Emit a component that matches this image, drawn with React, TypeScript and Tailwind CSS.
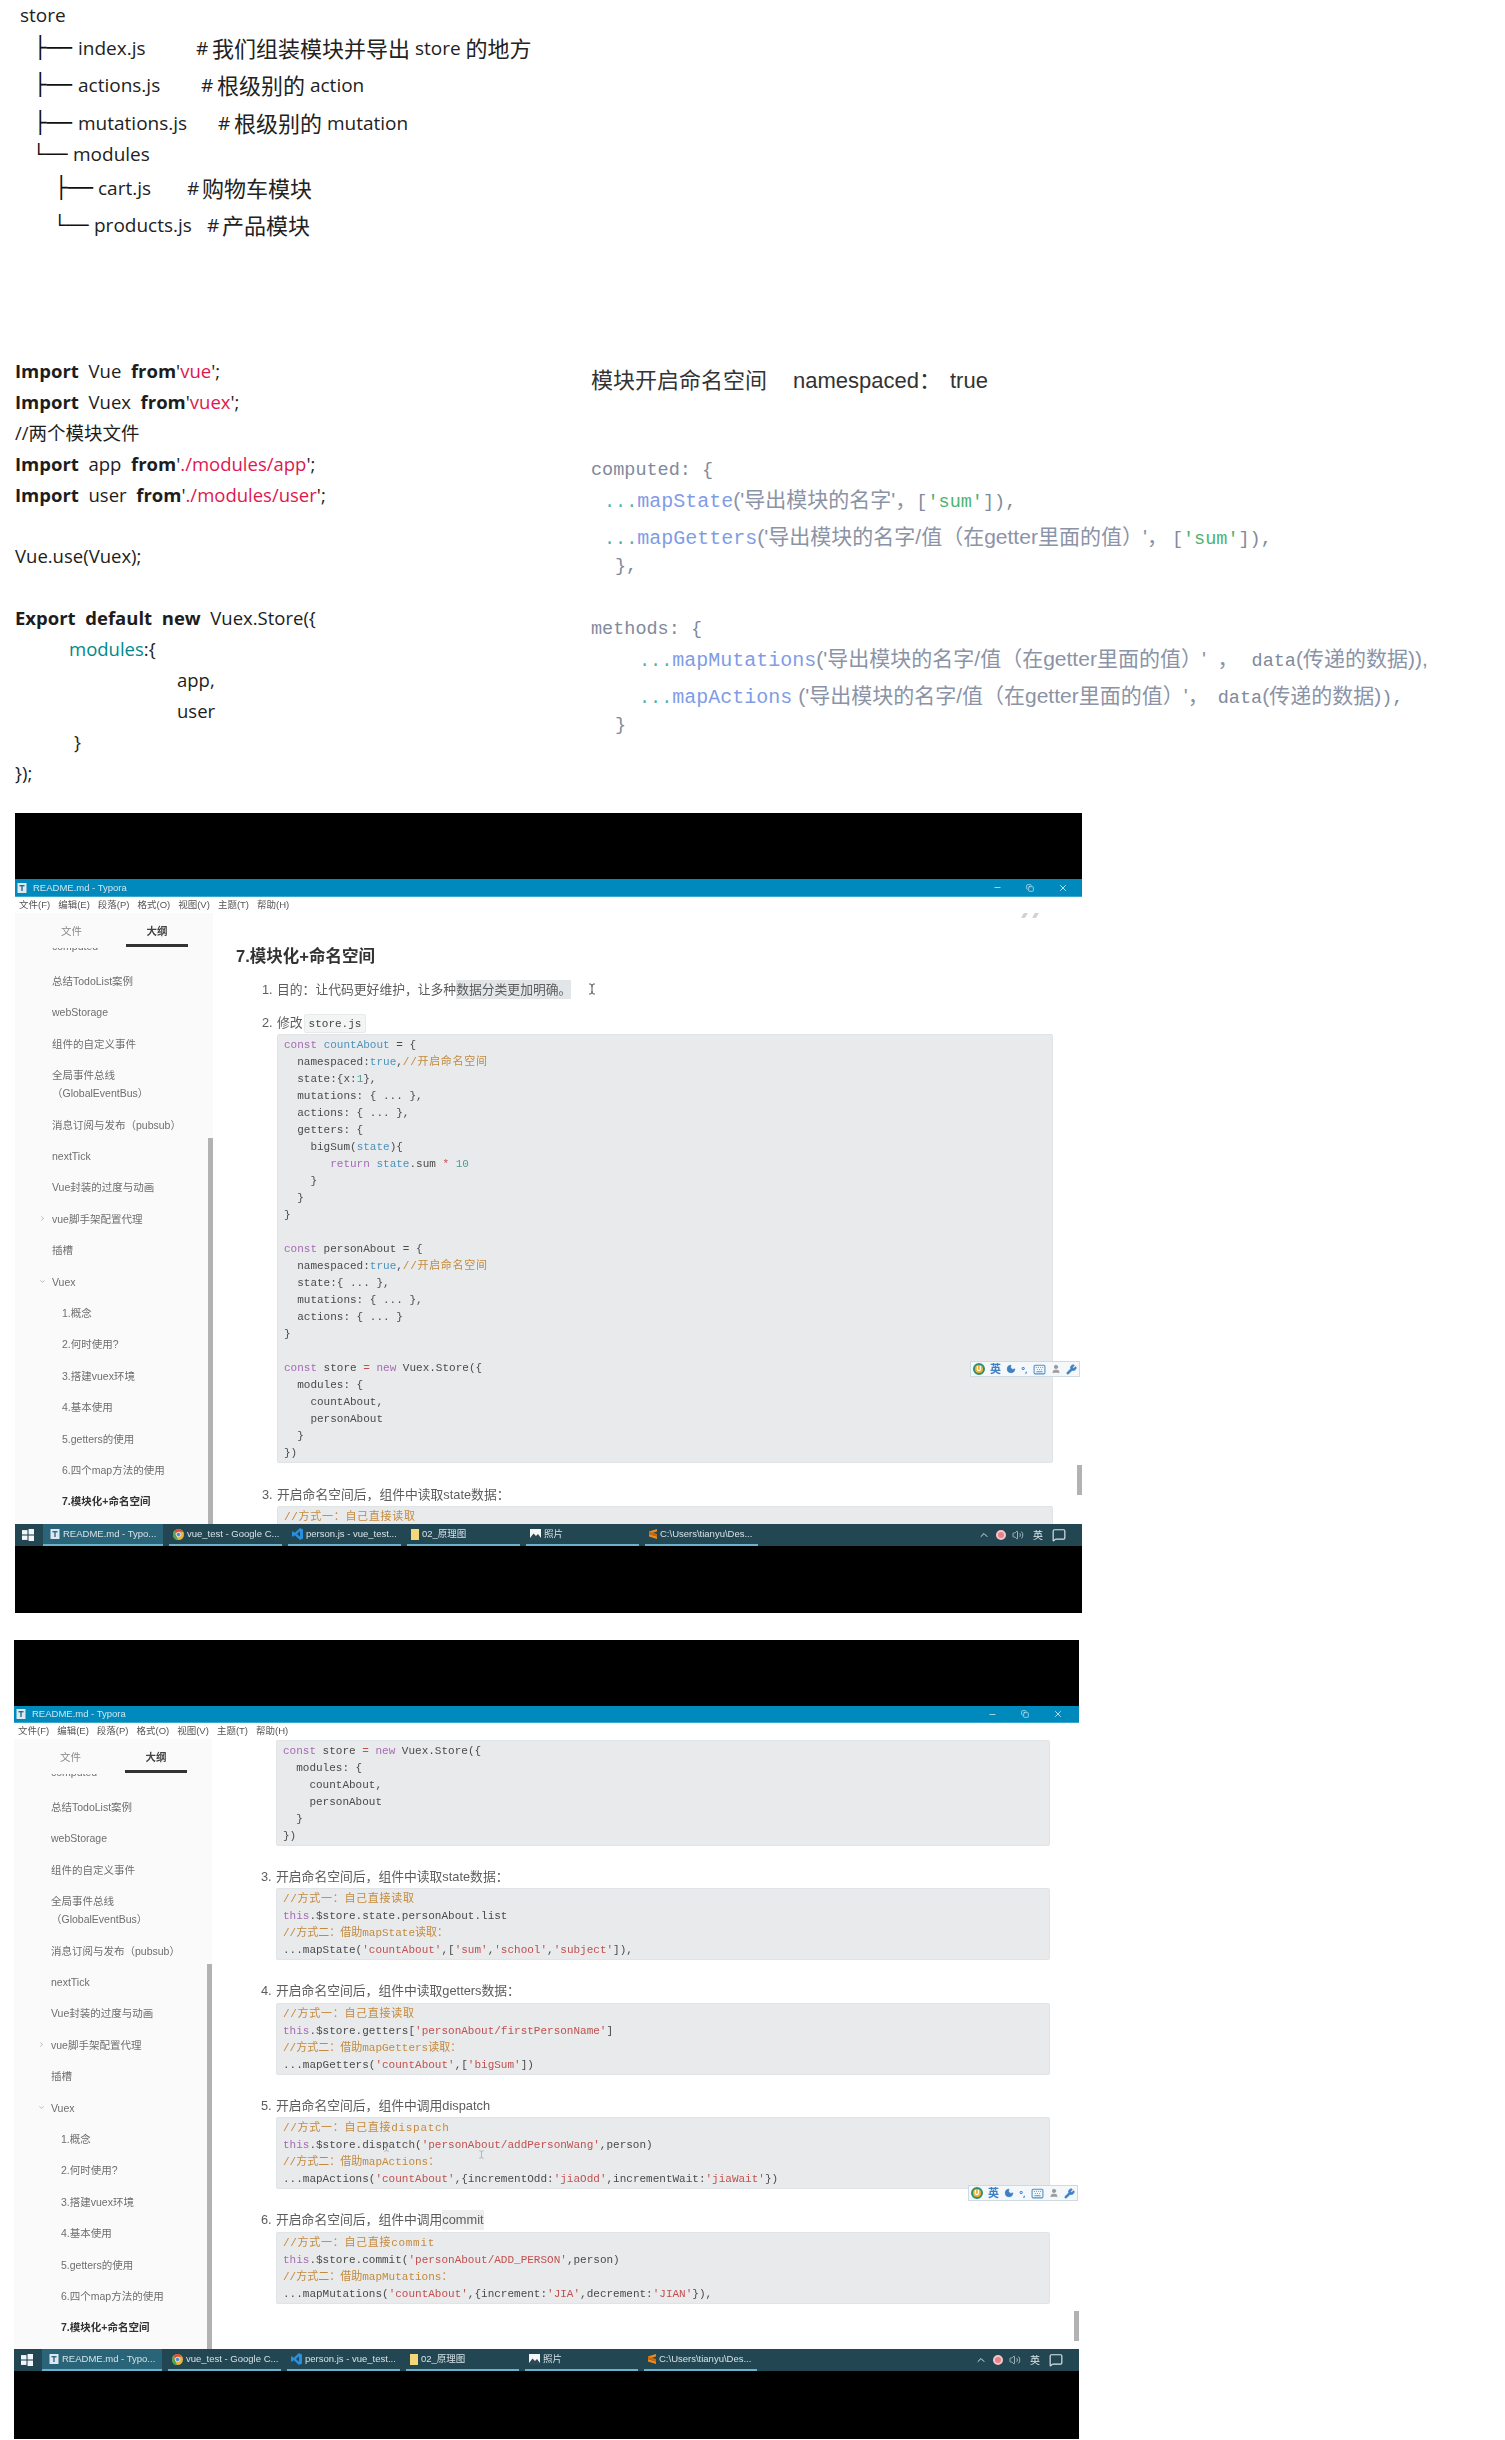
import React from "react";
import { ChevronUp, ChevronRight, ChevronDown, Minus, X, Copy, Volume2, MessageSquare, Moon, Keyboard, User, Wrench, TextCursor } from "lucide-react";

const UI = "font-['Liberation_Sans','Noto_Sans_CJK_SC',sans-serif]";
const MONO = "font-['Liberation_Mono','Noto_Sans_CJK_SC',monospace]";
const SEGOE = "font-['Open_Sans','Noto_Sans_CJK_SC',sans-serif]";

type Seg = [string, string?];
const K = "text-[#a66bb4]";
const C = "text-[#c48a3c]";
const C2 = "text-[#c48a3c] tracking-[0.7px]";
const S = "text-[#c2504f]";
const V = "text-[#4b93bd]";
const N = "text-[#4f9f8c]";
const plain = (t: string): Seg[] => [[t]];

function Tree({ glyph, glyphCls, name, nameCls, hashCls, cn, children }: { glyph: string; glyphCls: string; name: string; nameCls: string; hashCls?: string; cn: string; children?: React.ReactNode }) {
  return (
    <div className={`flex items-center h-[30px] whitespace-pre text-[19px] text-[#222] ${SEGOE} ${cn}`}>
      <span className={`font-['DejaVu_Sans_Mono',monospace] leading-none text-[#111] shrink-0 ${glyphCls}`}>{glyph}</span>
      <span className={`shrink-0 ${nameCls}`}>{name}</span>
      {hashCls ? <span className={hashCls}>#</span> : null}
      {children}
    </div>
  );
}
const Z = ({ children }: { children: React.ReactNode }) => <span className="text-[22px]">{children}</span>;

function Imp({ children }: { children: React.ReactNode }) {
  return <div className="h-[30.9px] leading-[30.9px] whitespace-pre">{children}</div>;
}
const B = ({ children }: { children: React.ReactNode }) => <span className="font-bold">{children}</span>;
const R = ({ children }: { children: React.ReactNode }) => <span className="text-[#e0174f]">{children}</span>;

const Dots = () => <span className="text-[#4fb3a9] text-[18.5px]">...</span>;
const Fn = ({ children }: { children: React.ReactNode }) => <span className="text-[#7f9ce6] text-[20px]">{children}</span>;
const Cn = ({ children }: { children: React.ReactNode }) => <span className={`text-[21px] text-[#8b93a6] ${UI}`}>{children}</span>;
const Sum = () => <span className="text-[#4cb26f] text-[18.5px]">'sum'</span>;

function RightLine({ cn, children }: { cn: string; children: React.ReactNode }) {
  return <div className={`h-[30px] leading-[30px] whitespace-pre text-[18.5px] text-[#7f8a9c] ${MONO} ${cn}`}>{children}</div>;
}

function Code({ lines, cn }: { lines: Seg[][]; cn: string }) {
  return (
    <div className={`ml-[64px] bg-[#e8eaec] border border-[#e1e4e6] rounded-[2px] pt-[2px] pb-0 pl-[6px] text-[11px] leading-[17px] text-[#4a4a4a] whitespace-pre shrink-0 ${MONO} ${cn}`}>
      {lines.map((l, i) => (
        <div key={i} className="h-[17px]">
          {l.map((s, j) => <span key={j} className={s[1] ?? ""}>{s[0]}</span>)}
        </div>
      ))}
    </div>
  );
}

function Li({ n, cn, children }: { n: string; cn: string; children: React.ReactNode }) {
  return (
    <div className={`ml-[49px] h-[20px] flex items-center text-[12.8px] text-[#5c5c5c] whitespace-pre shrink-0 ${UI} ${cn}`}>
      <span className="w-[15px] shrink-0">{n}</span>
      {children}
    </div>
  );
}

const sideItems: { t: string; l: string; icon?: "r" | "d"; h?: string; b?: boolean; second?: string }[] = [
  { t: "总结TodoList案例", l: "pl-[37px]" },
  { t: "webStorage", l: "pl-[37px]" },
  { t: "组件的自定义事件", l: "pl-[37px]" },
  { t: "全局事件总线", second: "\uFF08GlobalEventBus\uFF09", l: "pl-[37px]" },
  { t: "消息订阅与发布\uFF08pubsub\uFF09", l: "pl-[37px]" },
  { t: "nextTick", l: "pl-[37px]" },
  { t: "Vue封装的过度与动画", l: "pl-[37px]" },
  { t: "vue脚手架配置代理", l: "pl-[37px]", icon: "r" },
  { t: "插槽", l: "pl-[37px]" },
  { t: "Vuex", l: "pl-[37px]", icon: "d" },
  { t: "1.概念", l: "pl-[47px]" },
  { t: "2.何时使用?", l: "pl-[47px]" },
  { t: "3.搭建vuex环境", l: "pl-[47px]" },
  { t: "4.基本使用", l: "pl-[47px]" },
  { t: "5.getters的使用", l: "pl-[47px]" },
  { t: "6.四个map方法的使用", l: "pl-[47px]" },
  { t: "7.模块化+命名空间", l: "pl-[47px]", b: true },
];

function Sidebar({ barTop }: { barTop: string }) {
  return (
    <div className={`w-[198px] shrink-0 bg-[#fafafa] relative flex flex-col ${UI}`}>
      <div className="h-[35px] shrink-0 flex relative text-[10.5px]">
        <div className="w-[111px] text-center pt-[11px] text-[#8a8a8a] pl-[2px]">文件</div>
        <div className="w-[62px] text-center pt-[11px] font-bold text-[#444] border-b-[3px] border-[#333] h-[34px]">大纲</div>
      </div>
      <div className="flex-1 overflow-hidden text-[10.5px] text-[#6e6e6e]">
        <div className="h-[31.4px] -mt-[14.7px] pl-[37px] leading-[31.4px]"><div className="-translate-y-[3px]">computed</div></div>
        {sideItems.map((s) => (
          <div key={s.t} className={`${s.second ? "h-[49.6px]" : "h-[31.4px]"} ${s.l} relative flex flex-col justify-center ${s.b ? "font-bold text-[#333]" : ""}`}>
            {s.icon === "r" ? <ChevronRight className="absolute left-[24px] top-[12px] w-[7px] h-[7px] text-[#888]" /> : null}
            {s.icon === "d" ? <ChevronDown className="absolute left-[24px] top-[12px] w-[7px] h-[7px] text-[#888]" /> : null}
            <div className="whitespace-pre leading-[18px]">{s.t}</div>
            {s.second ? <div className="whitespace-pre leading-[18px]">{s.second}</div> : null}
          </div>
        ))}
      </div>
      <div className={`absolute right-0 bottom-0 w-[5px] bg-[#b2b2b2] ${barTop}`} />
    </div>
  );
}

const WinLogo = () => (
  <svg width="12" height="12" viewBox="0 0 11 11" fill="#f2f6f8"><rect x="0" y="1" width="5" height="4" /><rect x="6" y="0" width="5" height="5" /><rect x="0" y="6" width="5" height="4" /><rect x="6" y="6" width="5" height="5" /></svg>
);
const Typora = () => (
  <svg width="10" height="10" viewBox="0 0 9 10"><rect width="9" height="10" fill="#dfe8ee" /><rect x="2" y="2" width="5" height="1.4" fill="#2a6a8a" /><rect x="3.8" y="2" width="1.4" height="6" fill="#2a6a8a" /></svg>
);
const Chrome = () => (
  <svg width="11" height="11" viewBox="0 0 11 11"><circle cx="5.5" cy="5.5" r="5.5" fill="#e9b53a" /><path d="M5.5 0a5.5 5.5 0 0 1 4.8 2.8H5.5A2.7 2.7 0 0 0 3 4.4L1.2 2A5.5 5.5 0 0 1 5.5 0z" fill="#d9503f" /><path d="M1.2 2 3.4 7.2 5 11A5.5 5.5 0 0 1 1.2 2z" fill="#4ea35a" /><circle cx="5.5" cy="5.5" r="2.2" fill="#4a87d8" stroke="#fff" strokeWidth=".7" /></svg>
);
const VsCode = () => (
  <svg width="11" height="12" viewBox="0 0 11 12"><path d="M8 0 11 1.4v9.2L8 12 2.8 7.2.8 8.8 0 8.2V3.8l.8-.6 2 1.6z" fill="#2a8fdc" /><path d="M8 3.2 5 6l3 2.8z" fill="#1c4a5c" /></svg>
);
const Folder = () => <div className="w-[8px] h-[11px] bg-[#f3d778]" />;
const Photos = () => (
  <svg width="11" height="11" viewBox="0 0 11 11"><rect width="11" height="11" fill="#f4f6f7" /><path d="M0 9 3.5 4.5 6 7 8 5l3 4v2H0z" fill="#2b4a55" /></svg>
);
const Sublime = () => (
  <svg width="8" height="10" viewBox="0 0 8 10"><path d="M8 0v2.6L0 5V2.4zM0 5l8 2.4V10L0 7.6z" fill="#ef8a1c" /><path d="M0 2.4 8 5v2.4L0 5z" fill="#c96c10" /></svg>
);

function TaskTab({ icon, label, w, active }: { icon: React.ReactNode; label: string; w: string; active?: boolean }) {
  return (
    <div className={`h-[22px] flex items-center gap-[3px] border-b-[2px] border-[#69b4cc] text-[9.5px] text-[#d6e2e6] whitespace-pre shrink-0 ${w} ${active ? "bg-[#2a6478] pl-[7px]" : "pl-[4px]"}`}>
      <span className="shrink-0 flex items-center">{icon}</span>
      {label}
    </div>
  );
}

function Taskbar() {
  return (
    <div className={`h-[22px] shrink-0 bg-[#234653] flex items-center ${UI}`}>
      <div className="w-[28px] pl-[7px] flex items-center shrink-0"><WinLogo /></div>
      <div className="flex gap-[6px]">
        <TaskTab icon={<Typora />} label="README.md - Typo..." w="w-[120px]" active />
        <TaskTab icon={<Chrome />} label="vue_test - Google C..." w="w-[113px]" />
        <TaskTab icon={<VsCode />} label="person.js - vue_test..." w="w-[113px]" />
        <TaskTab icon={<Folder />} label="02_原理图" w="w-[113px]" />
        <TaskTab icon={<Photos />} label="照片" w="w-[113px]" />
        <TaskTab icon={<Sublime />} label="C:\Users\tianyu\Des..." w="w-[113px]" />
      </div>
      <div className="ml-auto flex items-center gap-[6px] pr-[16px] text-[#dbe5e9] text-[10px]">
        <ChevronUp className="w-[12px] h-[12px]" />
        <span className="w-[10px] h-[10px] rounded-full bg-[#e8818a] border-2 border-[#f4c6ca]" />
        <Volume2 className="w-[12px] h-[12px] text-[#9eb2ba]" />
        <span className="mx-[3px]">英</span>
        <MessageSquare className="w-[14px] h-[14px]" />
      </div>
    </div>
  );
}

function Ime({ cn }: { cn: string }) {
  return (
    <div className={`absolute w-[110px] h-[16px] bg-[#f4f8fb] border border-[#cfd9e2] flex items-center justify-between px-[2px] ${cn}`}>
      <span className="w-[12px] h-[12px] rounded-full border-[2px] border-[#2f8f6f] bg-[#f2b233] text-[7px] leading-[8px] text-center text-white font-bold">U</span>
      <span className={`text-[11px] leading-none text-[#3f7fc4] font-bold ${UI}`}>英</span>
      <Moon className="w-[10px] h-[10px] text-[#3f7fc4] fill-[#3f7fc4]" />
      <span className="text-[9px] leading-none text-[#3f7fc4] font-bold">°,</span>
      <Keyboard className="w-[13px] h-[13px] text-[#4f8fc8]" />
      <User className="w-[10px] h-[10px] text-[#999] fill-[#999]" />
      <Wrench className="w-[11px] h-[11px] text-[#3f7fc4] fill-[#3f7fc4]" />
    </div>
  );
}

function Shot({ cn, titleH, bodyH, topH, botH, pad, barTop, ctrlPr, imeCn, scrollCn, children }: { cn: string; titleH: string; bodyH: string; topH: string; botH: string; pad: string; barTop: string; ctrlPr: string; imeCn: string; scrollCn: string; children: React.ReactNode }) {
  return (
    <div className={`flex flex-col bg-white blur-[0.35px] ${cn}`}>
      <div className={`bg-black shrink-0 ${topH}`} />
      <div className={`shrink-0 bg-[#0089bd] border-b border-[#39a9c9] flex items-center pl-[2px] gap-[3px] text-[9.5px] text-[#cfe6ef] ${titleH} ${UI}`}>
        <Typora />
        <span className="ml-[3px]">README.md - Typora</span>
        <div className={`ml-auto flex items-center gap-[24px] text-[#dcedf4] ${ctrlPr}`}>
          <Minus className="w-[9px] h-[9px]" />
          <Copy className="w-[8px] h-[8px]" />
          <X className="w-[10px] h-[10px]" />
        </div>
      </div>
      <div className={`h-[16px] shrink-0 bg-white flex items-center gap-[8px] pl-[4px] text-[9.5px] text-[#555] ${UI}`}>
        {["文件(F)", "编辑(E)", "段落(P)", "格式(O)", "视图(V)", "主题(T)", "帮助(H)"].map((m) => <span key={m}>{m}</span>)}
      </div>
      <div className={`flex shrink-0 overflow-hidden ${bodyH}`}>
        <Sidebar barTop={barTop} />
        <div className={`flex-1 flex flex-col bg-white relative overflow-hidden ${pad}`}>
          {children}
          <div className={`absolute right-0 w-[5px] bg-[#b2b2b2] h-[30px] ${scrollCn}`} />
          <Ime cn={imeCn} />
        </div>
      </div>
      <Taskbar />
      <div className={`bg-black shrink-0 ${botH}`} />
    </div>
  );
}

const store1: Seg[][] = [
  [["const", K], [" "], ["countAbout", V], [" = {"]],
  [["  namespaced:"], ["true", V], [","], ["//开启命名空间", C2]],
  [["  state:{x:"], ["1", N], ["},"]],
  plain("  mutations: { ... },"),
  plain("  actions: { ... },"),
  plain("  getters: {"),
  [["    bigSum("], ["state", V], ["){"]],
  [["       "], ["return", K], [" "], ["state", V], [".sum "], ["*", S], [" "], ["10", N]],
  plain("    }"),
  plain("  }"),
  plain("}"),
  plain(" "),
  [["const", K], [" personAbout = {"]],
  [["  namespaced:"], ["true", V], [","], ["//开启命名空间", C2]],
  plain("  state:{ ... },"),
  plain("  mutations: { ... },"),
  plain("  actions: { ... }"),
  plain("}"),
  plain(" "),
  [["const", K], [" store "], ["=", S], [" "], ["new", K], [" Vuex.Store({"]],
  plain("  modules: {"),
  plain("    countAbout,"),
  plain("    personAbout"),
  plain("  }"),
  plain("})"),
];
const store2 = store1.slice(19);

const q3: Seg[][] = [
  [["//方式一\uFF1A自己直接读取", C2]],
  [["this", K], [".$store.state.personAbout.list"]],
  [["//方式二\uFF1A借助mapState读取\uFF1A", C]],
  [["...mapState("], ["'countAbout'", S], [",["], ["'sum'", S], [","], ["'school'", S], [","], ["'subject'", S], ["]),"]],
];
const q4: Seg[][] = [
  [["//方式一\uFF1A自己直接读取", C2]],
  [["this", K], [".$store.getters["], ["'personAbout/firstPersonName'", S], ["]"]],
  [["//方式二\uFF1A借助mapGetters读取\uFF1A", C]],
  [["...mapGetters("], ["'countAbout'", S], [",["], ["'bigSum'", S], ["])"]],
];
const q5: Seg[][] = [
  [["//方式一\uFF1A自己直接dispatch", C2]],
  [["this", K], [".$store.dispatch("], ["'personAbout/addPersonWang'", S], [",person)"]],
  [["//方式二\uFF1A借助mapActions\uFF1A", C]],
  [["...mapActions("], ["'countAbout'", S], [",{incrementOdd:"], ["'jiaOdd'", S], [",incrementWait:"], ["'jiaWait'", S], ["})"]],
];
const q6: Seg[][] = [
  [["//方式一\uFF1A自己直接commit", C2]],
  [["this", K], [".$store.commit("], ["'personAbout/ADD_PERSON'", S], [",person)"]],
  [["//方式二\uFF1A借助mapMutations\uFF1A", C]],
  [["...mapMutations("], ["'countAbout'", S], [",{increment:"], ["'JIA'", S], [",decrement:"], ["'JIAN'", S], ["}),"]],
];

export default function App() {
  return (
    <div className="w-[1505px] h-[2440px] bg-white overflow-hidden flex flex-col">
      <div className="shrink-0">
        <Tree cn="pl-[20px]" glyph="" glyphCls="" name="store" nameCls="" />
        <Tree cn="mt-[3px] pl-[34px]" glyph="├──" glyphCls="w-[44px] text-[21px]" name="index.js" nameCls="w-[118px]" hashCls="w-[16px]"><Z>我们组装模块并导出</Z> store <Z>的地方</Z></Tree>
        <Tree cn="mt-[7px] pl-[34px]" glyph="├──" glyphCls="w-[44px] text-[21px]" name="actions.js" nameCls="w-[123px]" hashCls="w-[16px]"><Z>根级别的</Z> action</Tree>
        <Tree cn="mt-[8px] pl-[34px]" glyph="├──" glyphCls="w-[44px] text-[21px]" name="mutations.js" nameCls="w-[140px]" hashCls="w-[16px]"><Z>根级别的</Z> mutation</Tree>
        <Tree cn="mt-[1px] pl-[33px]" glyph="└──" glyphCls="w-[40px] text-[19px]" name="modules" nameCls="" />
        <Tree cn="mt-[4px] pl-[55px]" glyph="├──" glyphCls="w-[43px] text-[21px]" name="cart.js" nameCls="w-[89px]" hashCls="w-[15px]"><Z>购物车模块</Z></Tree>
        <Tree cn="mt-[7px] pl-[54px]" glyph="└──" glyphCls="w-[40px] text-[19px]" name="products.js" nameCls="w-[113px]" hashCls="w-[15px]"><Z>产品模块</Z></Tree>
      </div>

      <div className="flex mt-[116px] shrink-0">
        <div className={`ml-[15px] w-[576px] shrink-0 text-[18.5px] text-[#1d1d1d] ${SEGOE}`}>
          <Imp><B>Import</B>  Vue  <B>from</B>'<R>vue</R>';</Imp>
          <Imp><B>Import</B>  Vuex  <B>from</B>'<R>vuex</R>';</Imp>
          <Imp>//两个模块文件</Imp>
          <Imp><B>Import</B>  app  <B>from</B>'<R>./modules/app</R>';</Imp>
          <Imp><B>Import</B>  user  <B>from</B>'<R>./modules/user</R>';</Imp>
          <Imp> </Imp>
          <Imp>Vue.use(Vuex);</Imp>
          <Imp> </Imp>
          <Imp><B>Export</B>  <B>default</B>  <B>new</B>  Vuex.Store({"{"}</Imp>
          <Imp><span className="ml-[54px] text-[#00898c]">modules</span>:{"{"}</Imp>
          <Imp><span className="ml-[162px]">app,</span></Imp>
          <Imp><span className="ml-[162px]">user</span></Imp>
          <Imp><span className="ml-[59px]">{"}"}</span></Imp>
          <Imp>{"});"}</Imp>
        </div>
        <div className="pt-[10px] flex-1">
          <div className={`h-[30px] leading-[30px] text-[22px] text-[#333] whitespace-pre ${UI}`}>模块开启命名空间<span className="ml-[26px]">{"namespaced\uFF1A"}</span><span className="ml-[9px]">true</span></div>
          <RightLine cn="mt-[60px]">computed: {"{"}</RightLine>
          <RightLine cn="pl-[13px] -mt-[1px]"><Dots /><Fn>mapState</Fn><Cn>{"('导出模块的名字'\uFF0C"}</Cn>[<Sum />]),</RightLine>
          <RightLine cn="pl-[13px] mt-[7px]"><Dots /><Fn>mapGetters</Fn><Cn>{"('导出模块的名字/值\uFF08在getter里面的值\uFF09'\uFF0C"}</Cn><span className="ml-[4px]">[</span><Sum />]),</RightLine>
          <RightLine cn="pl-[24px]">{"},"}</RightLine>
          <RightLine cn="mt-[33px]">methods: {"{"}</RightLine>
          <RightLine cn="pl-[48px] -mt-[1px]"><Dots /><Fn>mapMutations</Fn><Cn>{"('导出模块的名字/值\uFF08在getter里面的值\uFF09'  \uFF0C"}</Cn><span className="ml-[13px]">data</span><Cn>(传递的数据)),</Cn></RightLine>
          <RightLine cn="pl-[48px] mt-[7px]"><Dots /><Fn>mapActions</Fn><Cn>{" ('导出模块的名字/值\uFF08在getter里面的值\uFF09'\uFF0C"}</Cn><span className="ml-[9px]">data</span><Cn>(传递的数据)</Cn>),</RightLine>
          <RightLine cn="pl-[24px]">{"}"}</RightLine>
        </div>
      </div>

      <div className="h-[25px] shrink-0" />
      <Shot cn="ml-[15px] w-[1067px] h-[800px] shrink-0" titleH="h-[18px]" topH="h-[66px]" botH="h-[67px]" bodyH="h-[611px]" pad="pt-[31px]" barTop="top-[225px]" ctrlPr="pr-[14px]" imeCn="top-[448px] left-[757px]" scrollCn="top-[552px]">
        <div className={`ml-[23px] h-[24px] leading-[24px] text-[16.5px] font-bold text-[#333] shrink-0 ${UI}`}>7.模块化+命名空间</div>
        <Li n="1." cn="mt-[11px]">{"目的\uFF1A让代码更好维护\uFF0C让多种"}<span className="bg-[#e3e6e9]">数据分类更加明确。</span><TextCursor className="ml-[15px] w-[12px] h-[14px] text-[#555]" /></Li>
        <Li n="2." cn="mt-[13.6px]">修改<span className={`ml-[1px] px-[4px] h-[19px] leading-[19px] bg-[#f3f4f4] border border-[#e7eaed] rounded-[2px] text-[11px] text-[#444] ${MONO}`}>store.js</span></Li>
        <Code lines={store1} cn="mt-[1.4px] w-[776px]" />
        <Li n="3." cn="mt-[21px]">{"开启命名空间后\uFF0C组件中读取state数据\uFF1A"}</Li>
        <Code lines={q3} cn="mt-[1.7px] w-[776px]" />
        <div className="absolute top-[-2px] left-[810px] flex gap-[7px]">
          <span className="w-[4px] h-[7px] bg-[#d2d2d2] rounded-[1px] skew-x-[-30deg]" />
          <span className="w-[4px] h-[7px] bg-[#d2d2d2] rounded-[1px] skew-x-[-30deg]" />
        </div>
      </Shot>

      <div className="h-[27px] shrink-0" />
      <Shot cn="ml-[14px] w-[1065px] h-[800px] shrink-0" titleH="h-[17px]" topH="h-[66px]" botH="h-[68px]" bodyH="h-[610px]" pad="pt-0" barTop="top-[225px]" ctrlPr="pr-[16px]" imeCn="top-[446px] left-[756px]" scrollCn="top-[572px]">
        <Code lines={store2} cn="mt-[1px] w-[774px]" />
        <Li n="3." cn="mt-[19.7px]">{"开启命名空间后\uFF0C组件中读取state数据\uFF1A"}</Li>
        <Code lines={q3} cn="mt-[2px] w-[774px]" />
        <Li n="4." cn="mt-[20.6px]">{"开启命名空间后\uFF0C组件中读取getters数据\uFF1A"}</Li>
        <Code lines={q4} cn="mt-[2px] w-[774px]" />
        <Li n="5." cn="mt-[20.6px]">{"开启命名空间后\uFF0C组件中调用dispatch"}</Li>
        <Code lines={q5} cn="mt-[2px] w-[774px]" />
        <Li n="6." cn="mt-[20.6px]">{"开启命名空间后\uFF0C组件中调用"}<span className="bg-[#eeeeee]">commit</span></Li>
        <Code lines={q6} cn="mt-[2px] w-[774px]" />
        <TextCursor className="absolute left-[170px] top-[403px] w-[9px] h-[11px] text-[#aaa]" />
        <TextCursor className="absolute left-[265px] top-[410px] w-[9px] h-[11px] text-[#aaa]" />
      </Shot>
    </div>
  );
}
